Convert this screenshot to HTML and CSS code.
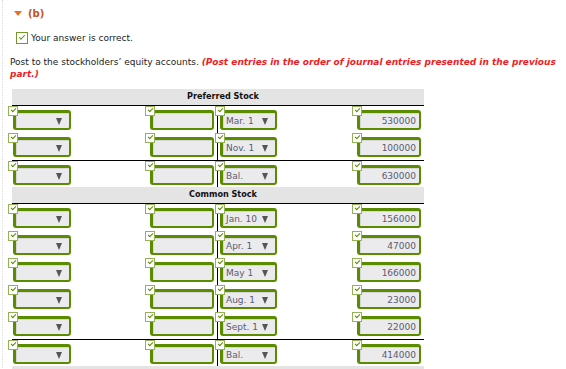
FILE: index.html
```html
<!DOCTYPE html>
<html lang="en">

<head>
    <meta charset="UTF-8">
    <title>Stockholders' equity accounts</title>
    <link rel="stylesheet" href="styles.css">
</head>

<body>
    <div class="part-head">
        <span class="tri"></span>
        <span class="part-label">(b)</span>
    </div>

    <div class="result">
        <span class="result-box"></span>
        <span>Your answer is correct.</span>
    </div>

    <p class="instr">Post to the stockholders’ equity accounts. <em class="note">(Post entries in the order of journal entries presented in the previous</em> <em class="note">part.)</em></p>

    <div class="taccount">
        <div class="thead">Preferred Stock</div>

        <div class="trow">
            <div class="side debit">
                <span class="field sel acct"><i class="ok"></i><span class="arrow"></span></span>
                <span class="field amt"><i class="ok"></i></span>
            </div>
            <div class="side credit">
                <span class="field sel date"><i class="ok"></i>Mar. 1<span class="arrow"></span></span>
                <span class="field amt"><i class="ok"></i>530000</span>
            </div>
        </div>
        <div class="trow">
            <div class="side debit">
                <span class="field sel acct"><i class="ok"></i><span class="arrow"></span></span>
                <span class="field amt"><i class="ok"></i></span>
            </div>
            <div class="side credit">
                <span class="field sel date"><i class="ok"></i>Nov. 1<span class="arrow"></span></span>
                <span class="field amt"><i class="ok"></i>100000</span>
            </div>
        </div>
        <div class="trow total">
            <div class="side debit">
                <span class="field sel acct"><i class="ok"></i><span class="arrow"></span></span>
                <span class="field amt"><i class="ok"></i></span>
            </div>
            <div class="side credit">
                <span class="field sel date"><i class="ok"></i>Bal.<span class="arrow"></span></span>
                <span class="field amt"><i class="ok"></i>630000</span>
            </div>
        </div>

        <div class="thead">Common Stock</div>

        <div class="trow">
            <div class="side debit">
                <span class="field sel acct"><i class="ok"></i><span class="arrow"></span></span>
                <span class="field amt"><i class="ok"></i></span>
            </div>
            <div class="side credit">
                <span class="field sel date"><i class="ok"></i>Jan. 10<span class="arrow"></span></span>
                <span class="field amt"><i class="ok"></i>156000</span>
            </div>
        </div>
        <div class="trow">
            <div class="side debit">
                <span class="field sel acct"><i class="ok"></i><span class="arrow"></span></span>
                <span class="field amt"><i class="ok"></i></span>
            </div>
            <div class="side credit">
                <span class="field sel date"><i class="ok"></i>Apr. 1<span class="arrow"></span></span>
                <span class="field amt"><i class="ok"></i>47000</span>
            </div>
        </div>
        <div class="trow">
            <div class="side debit">
                <span class="field sel acct"><i class="ok"></i><span class="arrow"></span></span>
                <span class="field amt"><i class="ok"></i></span>
            </div>
            <div class="side credit">
                <span class="field sel date"><i class="ok"></i>May 1<span class="arrow"></span></span>
                <span class="field amt"><i class="ok"></i>166000</span>
            </div>
        </div>
        <div class="trow">
            <div class="side debit">
                <span class="field sel acct"><i class="ok"></i><span class="arrow"></span></span>
                <span class="field amt"><i class="ok"></i></span>
            </div>
            <div class="side credit">
                <span class="field sel date"><i class="ok"></i>Aug. 1<span class="arrow"></span></span>
                <span class="field amt"><i class="ok"></i>23000</span>
            </div>
        </div>
        <div class="trow">
            <div class="side debit">
                <span class="field sel acct"><i class="ok"></i><span class="arrow"></span></span>
                <span class="field amt"><i class="ok"></i></span>
            </div>
            <div class="side credit">
                <span class="field sel date"><i class="ok"></i>Sept. 1<span class="arrow"></span></span>
                <span class="field amt"><i class="ok"></i>22000</span>
            </div>
        </div>
        <div class="trow total">
            <div class="side debit">
                <span class="field sel acct"><i class="ok"></i><span class="arrow"></span></span>
                <span class="field amt"><i class="ok"></i></span>
            </div>
            <div class="side credit">
                <span class="field sel date"><i class="ok"></i>Bal.<span class="arrow"></span></span>
                <span class="field amt"><i class="ok"></i>414000</span>
            </div>
        </div>
        <div class="tfoot"></div>
    </div>
</body>

</html>
```

FILE: styles.css
```css
* {
    margin: 0;
    padding: 0;
    box-sizing: border-box;
}

body {
    background: #fff;
    color: #222;
    font-family: "DejaVu Sans", Verdana, sans-serif;
    font-size: 9px;
    border-left: 1px dotted #d3dde8;
    margin-left: 2px;
    min-height: 369px;
}

.part-head {
    display: flex;
    align-items: center;
    padding: 6px 0 0 11px;
    height: 20px;
}

.tri {
    width: 0;
    height: 0;
    border-left: 4px solid transparent;
    border-right: 4px solid transparent;
    border-top: 5px solid #f26c22;
    margin-right: 6px;
}

.part-label {
    color: #c8541c;
    font-weight: bold;
    font-size: 10px;
}

.result {
    display: flex;
    align-items: center;
    padding: 11px 0 0 13px;
    height: 25px;
}

.result-box {
    width: 12px;
    height: 12px;
    border: 1px solid #6f9a2a;
    background: #fff;
    margin-right: 3px;
    position: relative;
}

.result-box::after {
    content: "";
    position: absolute;
    left: 2px;
    top: 2px;
    width: 5px;
    height: 2px;
    border-left: 1.5px solid #5f9a1f;
    border-bottom: 1.5px solid #5f9a1f;
    transform: rotate(-45deg);
}

.instr {
    padding: 11px 8px 0 7px;
    line-height: 12px;
}

.note {
    color: #ee1c24;
    font-weight: bold;
}

.taccount {
    width: 412px;
    margin: 9px 0 0 9px;
}

.thead {
    background: #e4e4e4;
    height: 17px;
    border-bottom: 1px solid #000;
    text-align: center;
    font-family: "DejaVu Sans Condensed", "DejaVu Sans", sans-serif;
    font-weight: bold;
    line-height: 15px;
    color: #111;
    padding-left: 10px;
}

.tfoot {
    background: #e4e4e4;
    height: 6px;
}

.trow {
    display: flex;
    height: 27px;
}

.trow.total {
    border-top: 1px solid #000;
}

.side {
    display: flex;
    justify-content: space-between;
    padding-top: 4px;
}

.debit {
    width: 206px;
    border-right: 1px solid #000;
    padding-left: 1px;
    padding-right: 3px;
}

.credit {
    width: 206px;
    padding-left: 2px;
    padding-right: 3px;
}

.field {
    position: relative;
    display: flex;
    align-items: center;
    height: 20px;
    background: #ebebee;
    border-style: solid;
    border-color: #5b8c00;
    border-width: 3px 2px 2px 3px;
    border-radius: 3px;
    box-shadow: inset 1px 1px 0 #d6d6d6;
    color: #5a5c70;
    font-size: 9px;
}

.acct {
    width: 58px;
}

.date {
    width: 57px;
    padding-left: 3px;
}

.amt {
    width: 64px;
    justify-content: flex-end;
    padding-right: 3px;
}

.arrow {
    position: absolute;
    right: 7px;
    top: 5px;
    width: 0;
    height: 0;
    border-left: 3.5px solid transparent;
    border-right: 3.5px solid transparent;
    border-top: 7px solid #555;
}

.ok {
    position: absolute;
    left: -8px;
    top: -7px;
    width: 10px;
    height: 10px;
    background: #fff;
    border: 1px solid #93b356;
}

.ok::after {
    content: "";
    position: absolute;
    left: 2px;
    top: 1px;
    width: 4px;
    height: 2px;
    border-left: 1.5px solid #5b8c00;
    border-bottom: 1.5px solid #5b8c00;
    transform: rotate(-45deg);
}
```
